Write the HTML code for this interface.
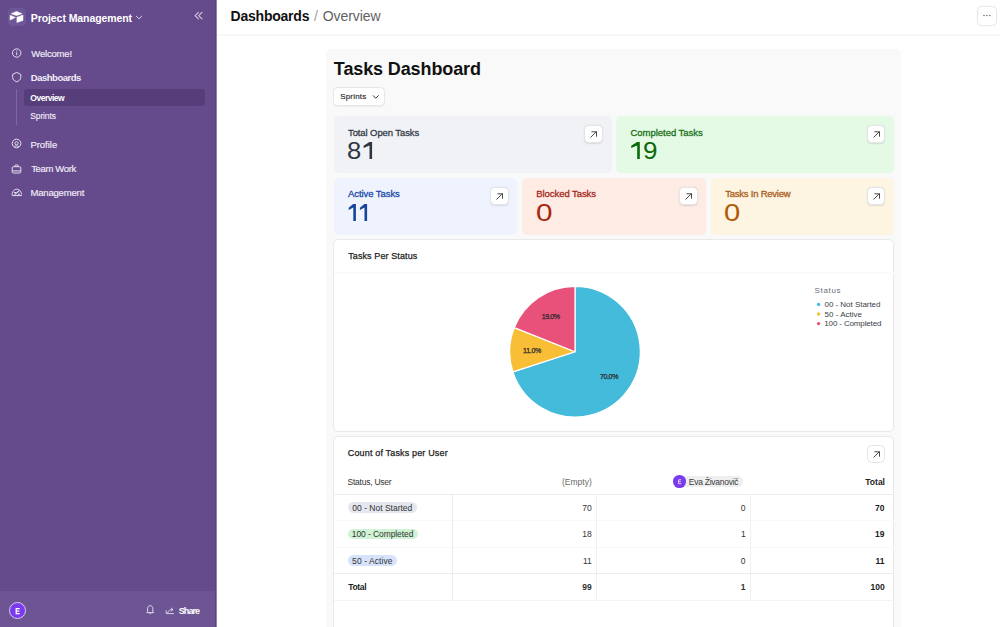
<!DOCTYPE html>
<html><head><meta charset="utf-8"><style>
html,body{margin:0;padding:0;width:1000px;height:627px;overflow:hidden;background:#fff;font-family:"Liberation Sans",sans-serif}
.t{position:absolute;line-height:1;white-space:nowrap}
.card{position:absolute;border-radius:5px}
.wc{position:absolute;background:#fff;border:1px solid #e9e9e9;border-radius:5px;box-sizing:border-box}
.ab{position:absolute;width:18.6px;height:18.2px;box-sizing:border-box;border:1px solid #e3e5e9;border-radius:4.5px;background:#fff}
.pill{position:absolute;height:10.6px;border-radius:6px}
</style></head><body>

<div style="position:absolute;left:0;top:0;width:216px;height:627px;background:#654b8c"></div><div style="position:absolute;left:215px;top:0;width:1px;height:627px;background:#5b4185"></div><div style="position:absolute;left:216px;top:0;width:1px;height:627px;background:#8f85a3"></div>
<div style="position:absolute;left:0;top:591px;width:215px;height:36px;background:#6d5594"></div>
<div style="position:absolute;left:7px;top:7px;width:20px;height:20px;box-sizing:border-box;border-radius:5px;background:#6e5798;border:1px solid #624a8a"></div>
<svg style="position:absolute;left:0;top:0" width="30" height="30" viewBox="0 0 30 30">
  <path d="M11.3 13.7 L16.5 11.4 L21.9 13.7 L16.5 15.5 Z" fill="#fff" stroke="#fff" stroke-width="0.6" stroke-linejoin="round"/>
  <path d="M10.1 15.3 L15.3 17.4 L10.1 20.1 Z" fill="#fff" stroke="#fff" stroke-width="0.5" stroke-linejoin="round"/>
  <path d="M16.9 17.3 L23 15 L23 20.4 L16.9 22.5 Z" fill="#fff" stroke="#fff" stroke-width="0.5" stroke-linejoin="round"/>
</svg>
<svg style="position:absolute;left:135px;top:14px" width="8" height="7" viewBox="0 0 8 7"><path d="M1.3 2.2 L4 4.8 L6.7 2.2" stroke="#d8d0e6" stroke-width="1" fill="none" stroke-linecap="round"/></svg>
<svg style="position:absolute;left:180px;top:0" width="30" height="30" viewBox="180 0 30 30"><path d="M198.4 12.3 L195.1 15.6 L198.4 18.9 M202 12.3 L198.7 15.6 L202 18.9" stroke="#d6cde4" stroke-width="1.05" fill="none" stroke-linecap="round" stroke-linejoin="round"/></svg>

<!-- sidebar icons -->
<svg style="position:absolute;left:0;top:40px" width="30" height="50" viewBox="0 40 30 50"><circle cx="16.7" cy="53" r="4.2" stroke="#e2dbec" stroke-width="1" fill="none"/><path d="M16.7 52.4V55.2" stroke="#e2dbec" stroke-width="1"/><circle cx="16.7" cy="50.9" r="0.55" fill="#e2dbec"/></svg>
<svg style="position:absolute;left:0;top:60px" width="30" height="30" viewBox="0 60 30 30"><path d="M16.7 72.4 L20.8 74.4 V77.2 C20.8 79.6 18.9 81.1 16.7 81.8 C14.5 81.1 12.6 79.6 12.6 77.2 V74.4 Z" stroke="#e2dbec" stroke-width="1" fill="none" stroke-linejoin="round"/></svg>
<div style="position:absolute;left:16px;top:89px;width:1px;height:36px;background:#7d68a2"></div>
<div style="position:absolute;left:24px;top:89px;width:181px;height:17px;border-radius:3px;background:#553e7a"></div>
<svg style="position:absolute;left:11px;top:138.3px" width="11" height="11" viewBox="0 0 11 11"><circle cx="5.55" cy="5.5" r="4.3" stroke="#e6e0ee" stroke-width="1" fill="none"/><circle cx="5.55" cy="5.3" r="1.6" stroke="#e6e0ee" stroke-width="0.95" fill="none"/><path d="M3.3 8.6 C4.2 7.6 6.9 7.6 7.8 8.6" stroke="#e6e0ee" stroke-width="0.95" fill="none"/></svg>
<svg style="position:absolute;left:11.2px;top:163.8px" width="11" height="10" viewBox="0 0 11 10"><rect x="1.2" y="2.7" width="8.6" height="6.3" rx="1.2" stroke="#e6e0ee" stroke-width="1" fill="none"/><path d="M3.9 2.7 V1.6 C3.9 1.2 4.2 1 4.6 1 H6.4 C6.8 1 7.1 1.2 7.1 1.6 V2.7 M1.2 6.9 H9.8" stroke="#e6e0ee" stroke-width="1" fill="none"/></svg>
<svg style="position:absolute;left:11px;top:187.6px" width="12" height="9" viewBox="0 0 12 9"><path d="M1.3 7.6 C0.6 4.4 2.8 1.2 5.8 1.2 C8.8 1.2 11 4.4 10.3 7.6 Z" stroke="#e6e0ee" stroke-width="1" fill="none" stroke-linejoin="round"/><path d="M3.9 6.4 L7.9 3.0 M3.4 4.4 L4.6 4.4 M7.2 6.2 L8.4 6.2" stroke="#e6e0ee" stroke-width="1.05" fill="none" stroke-linecap="round"/></svg>

<!-- footer -->
<div style="position:absolute;left:9px;top:602.2px;width:17.3px;height:17.3px;box-sizing:border-box;border-radius:50%;background:#7c3aed;border:1px solid #d9cdf0"></div>
<svg style="position:absolute;left:145px;top:604px" width="11" height="11" viewBox="0 0 11 11"><path d="M2.6 7.6 V4.8 C2.6 2.8 3.6 1.6 5.2 1.6 C6.8 1.6 7.8 2.8 7.8 4.8 V7.6 C7.8 8 8.5 8.3 8.8 8.6 H1.6 C1.9 8.3 2.6 8 2.6 7.6 Z" stroke="#e4ddef" stroke-width="0.95" fill="none" stroke-linejoin="round"/><path d="M4.4 9.5 C4.7 10 5.7 10 6 9.5" stroke="#e4ddef" stroke-width="0.9" fill="none" stroke-linecap="round"/></svg>
<svg style="position:absolute;left:165px;top:606px" width="10" height="9" viewBox="0 0 10 9"><path d="M1.2 4.6 V7.6 H8.6 M2.8 6.6 C3.3 4.5 4.8 3.6 7.8 3.6 M6.2 2.1 L7.9 3.6 L6.2 5.1" stroke="#e4ddef" stroke-width="0.9" fill="none" stroke-linecap="round" stroke-linejoin="round"/></svg>

<!-- header -->
<div style="position:absolute;left:217px;top:34px;width:783px;height:2px;background:#f8f8f8"></div>
<div style="position:absolute;left:977px;top:5.5px;width:18px;height:18px;border:1px solid #e8e8e8;border-radius:4.5px;background:#fff;box-shadow:0 0 1.5px rgba(0,0,0,0.06)"></div>
<svg style="position:absolute;left:982px;top:14px" width="10" height="3" viewBox="0 0 10 3"><circle cx="2" cy="1.5" r="0.75" fill="#666"/><circle cx="4.9" cy="1.5" r="0.75" fill="#666"/><circle cx="7.8" cy="1.5" r="0.75" fill="#666"/></svg>

<!-- panel -->
<div style="position:absolute;left:326px;top:49px;width:575px;height:600px;background:#f9f9f9;border-radius:5px"></div>
<div style="position:absolute;left:333px;top:87.4px;width:52.3px;height:18.8px;box-sizing:border-box;border:1px solid #e6e6e6;border-radius:4.5px;background:#fff;box-shadow:0 0.5px 1px rgba(0,0,0,0.05)"></div>
<svg style="position:absolute;left:372px;top:93.8px" width="8" height="6" viewBox="0 0 8 6"><path d="M1.3 1.7 L3.8 4.3 L6.3 1.7" stroke="#333" stroke-width="1" fill="none" stroke-linecap="round" stroke-linejoin="round"/></svg>

<div class="card" style="left:334px;top:116px;width:277.5px;height:57px;background:#f1f2f6"></div>
<div class="card" style="left:616px;top:116px;width:278px;height:57px;background:#e4fae5"></div>
<div class="card" style="left:334px;top:178px;width:183px;height:56.5px;background:#eef3fd"></div>
<div class="card" style="left:522px;top:178px;width:183.7px;height:56.5px;background:#fdebe4"></div>
<div class="card" style="left:710.6px;top:178px;width:183.4px;height:56.5px;background:#fdf4e1"></div>
<div class='ab' style='left:584.3px;top:125px;box-shadow:0 0.5px 1.5px rgba(0,0,0,0.10);'><svg style="position:absolute;left:0;top:0" width="18" height="18" viewBox="0 0 18 18"><path d="M5.8 11.2 L11.4 5.7 M6.8 5.8 H11.5 V10.3" stroke="#4a4a4a" stroke-width="1" fill="none" stroke-linecap="round" stroke-linejoin="round"/></svg></div>
<div class='ab' style='left:866.8px;top:125px;box-shadow:0 0.5px 1.5px rgba(0,0,0,0.10);'><svg style="position:absolute;left:0;top:0" width="18" height="18" viewBox="0 0 18 18"><path d="M5.8 11.2 L11.4 5.7 M6.8 5.8 H11.5 V10.3" stroke="#4a4a4a" stroke-width="1" fill="none" stroke-linecap="round" stroke-linejoin="round"/></svg></div>
<div class='ab' style='left:490.3px;top:187px;box-shadow:0 0.5px 1.5px rgba(0,0,0,0.10);'><svg style="position:absolute;left:0;top:0" width="18" height="18" viewBox="0 0 18 18"><path d="M5.8 11.2 L11.4 5.7 M6.8 5.8 H11.5 V10.3" stroke="#4a4a4a" stroke-width="1" fill="none" stroke-linecap="round" stroke-linejoin="round"/></svg></div>
<div class='ab' style='left:679px;top:187px;box-shadow:0 0.5px 1.5px rgba(0,0,0,0.10);'><svg style="position:absolute;left:0;top:0" width="18" height="18" viewBox="0 0 18 18"><path d="M5.8 11.2 L11.4 5.7 M6.8 5.8 H11.5 V10.3" stroke="#4a4a4a" stroke-width="1" fill="none" stroke-linecap="round" stroke-linejoin="round"/></svg></div>
<div class='ab' style='left:866.8px;top:187px;box-shadow:0 0.5px 1.5px rgba(0,0,0,0.10);'><svg style="position:absolute;left:0;top:0" width="18" height="18" viewBox="0 0 18 18"><path d="M5.8 11.2 L11.4 5.7 M6.8 5.8 H11.5 V10.3" stroke="#4a4a4a" stroke-width="1" fill="none" stroke-linecap="round" stroke-linejoin="round"/></svg></div>

<div class="wc" style="left:333px;top:239px;width:561px;height:192.5px"></div>
<div style="position:absolute;left:334px;top:272px;width:560px;height:2px;background:#fafafa"></div>
<svg style="position:absolute;left:0;top:0" width="1000" height="627"><path d="M575.0,351.7 L575.00,286.40 A65.3,65.3 0 1 1 512.90,371.88 Z" fill="#45bbdc" stroke="#fff" stroke-width="1.2" stroke-linejoin="round"/><path d="M575.0,351.7 L512.90,371.88 A65.3,65.3 0 0 1 514.29,327.66 Z" fill="#f7be36" stroke="#fff" stroke-width="1.2" stroke-linejoin="round"/><path d="M575.0,351.7 L514.29,327.66 A65.3,65.3 0 0 1 575.00,286.40 Z" fill="#e8527a" stroke="#fff" stroke-width="1.2" stroke-linejoin="round"/></svg>
<svg style="position:absolute;left:0;top:0" width="1000" height="627"><circle cx="818.6" cy="304.4" r="1.7" fill="#45bbdc"/><circle cx="818.6" cy="314" r="1.7" fill="#f7be36"/><circle cx="818.6" cy="323.6" r="1.7" fill="#e8527a"/></svg>

<div class="wc" style="left:333px;top:436px;width:561px;height:220px"></div>
<div class='ab' style='left:866.8px;top:445.2px;'><svg style="position:absolute;left:0;top:0" width="18" height="18" viewBox="0 0 18 18"><path d="M5.8 11.2 L11.4 5.7 M6.8 5.8 H11.5 V10.3" stroke="#4a4a4a" stroke-width="1" fill="none" stroke-linecap="round" stroke-linejoin="round"/></svg></div>
<div style="position:absolute;left:334px;top:493.5px;width:560px;height:1px;background:#ececec"></div>
<div style="position:absolute;left:334px;top:520px;width:560px;height:1px;background:#f9f9f9"></div>
<div style="position:absolute;left:334px;top:546.5px;width:560px;height:1px;background:#f9f9f9"></div>
<div style="position:absolute;left:334px;top:573px;width:560px;height:1px;background:#ececec"></div>
<div style="position:absolute;left:334px;top:600px;width:560px;height:1px;background:#f3f3f3"></div>
<div style="position:absolute;left:452px;top:494px;width:1px;height:106px;background:#ececec"></div>
<div style="position:absolute;left:596px;top:494px;width:1px;height:106px;background:#f0f0f0"></div>
<div style="position:absolute;left:750px;top:494px;width:1px;height:106px;background:#f0f0f0"></div>
<div class="pill" style="left:347.6px;top:502.4px;width:69px;background:#e4e7ee"></div>
<div class="pill" style="left:347.6px;top:528.8px;width:70.4px;background:#cff3d4"></div>
<div class="pill" style="left:347.6px;top:555px;width:49.4px;background:#d6e3fb"></div>
<div style="position:absolute;left:676px;top:476.4px;width:67px;height:10.2px;border-radius:5.1px;background:#efefef"></div>
<div style="position:absolute;left:673.3px;top:475.3px;width:12.5px;height:12.6px;border-radius:50%;background:#7c3aed"></div>

<div class='t' style='left:30.75px;top:13.00px;font-size:10.5px;font-weight:700;color:#ffffff;letter-spacing:-0.079px;'>Project Management</div>
<div class='t' style='left:31.30px;top:49.00px;font-size:9.5px;font-weight:400;color:#f3eef8;letter-spacing:-0.179px;-webkit-text-stroke:0.15px #f3eef8;'>Welcome!</div>
<div class='t' style='left:30.80px;top:73.00px;font-size:9.5px;font-weight:700;color:#f3eef8;letter-spacing:-0.478px;'>Dashboards</div>
<div class='t' style='left:30.35px;top:94.00px;font-size:8.5px;font-weight:700;color:#ffffff;letter-spacing:-0.500px;'>Overview</div>
<div class='t' style='left:30.35px;top:112.00px;font-size:8.5px;font-weight:400;color:#f3eef8;letter-spacing:-0.150px;-webkit-text-stroke:0.1px #f3eef8;'>Sprints</div>
<div class='t' style='left:30.45px;top:140.00px;font-size:9.5px;font-weight:400;color:#f3eef8;letter-spacing:-0.033px;-webkit-text-stroke:0.15px #f3eef8;'>Profile</div>
<div class='t' style='left:31.20px;top:164.00px;font-size:9.5px;font-weight:400;color:#f3eef8;letter-spacing:-0.338px;-webkit-text-stroke:0.15px #f3eef8;'>Team Work</div>
<div class='t' style='left:30.45px;top:188.00px;font-size:9.5px;font-weight:400;color:#f3eef8;letter-spacing:-0.172px;-webkit-text-stroke:0.15px #f3eef8;'>Management</div>
<div class='t' style='left:178.75px;top:607.00px;font-size:9px;font-weight:700;color:#ffffff;letter-spacing:-0.925px;'>Share</div>
<div class='t' style='left:230.60px;top:9.00px;font-size:14px;font-weight:700;color:#111111;letter-spacing:-0.228px;'>Dashboards</div>
<div class='t' style='left:314.00px;top:9.00px;font-size:14px;font-weight:400;color:#a0a0a0;letter-spacing:0.000px;'>/</div>
<div class='t' style='left:322.75px;top:9.00px;font-size:14px;font-weight:400;color:#5f5f5f;letter-spacing:-0.057px;'>Overview</div>
<div class='t' style='left:333.85px;top:60.00px;font-size:18px;font-weight:700;color:#111111;letter-spacing:-0.118px;'>Tasks Dashboard</div>
<div class='t' style='left:340.25px;top:93.00px;font-size:8px;font-weight:400;color:#2a2a2a;letter-spacing:0.167px;-webkit-text-stroke:0.15px #2a2a2a;'>Sprints</div>
<div class='t' style='left:348.00px;top:128.00px;font-size:9.5px;font-weight:400;color:#353c47;letter-spacing:-0.100px;-webkit-text-stroke:0.3px #353c47;'>Total Open Tasks</div>
<div class='t' style='left:346.93px;top:139.00px;font-size:24px;font-weight:400;color:#2f3640;letter-spacing:0.000px;transform:scaleX(1.067);transform-origin:0 0;'>8</div>
<div class='t' style='left:630.55px;top:128.00px;font-size:9.5px;font-weight:400;color:#1a721a;letter-spacing:-0.039px;-webkit-text-stroke:0.3px #1a721a;'>Completed Tasks</div>
<div class='t' style='left:642.92px;top:139.00px;font-size:24px;font-weight:400;color:#0c6a0c;letter-spacing:0.000px;transform:scaleX(1.084);transform-origin:0 0;'>9</div>
<div class='t' style='left:348.00px;top:189.00px;font-size:9.5px;font-weight:400;color:#1f4aa8;letter-spacing:-0.073px;-webkit-text-stroke:0.3px #1f4aa8;'>Active Tasks</div>
<div class='t' style='left:536.30px;top:189.00px;font-size:9.5px;font-weight:400;color:#a5281c;letter-spacing:-0.067px;-webkit-text-stroke:0.3px #a5281c;'>Blocked Tasks</div>
<div class='t' style='left:535.57px;top:201.00px;font-size:24px;font-weight:400;color:#a82812;letter-spacing:0.000px;transform:scaleX(1.235);transform-origin:0 0;'>0</div>
<div class='t' style='left:725.30px;top:189.00px;font-size:9.5px;font-weight:400;color:#a85e1c;letter-spacing:-0.239px;-webkit-text-stroke:0.3px #a85e1c;'>Tasks In Review</div>
<div class='t' style='left:724.28px;top:201.00px;font-size:24px;font-weight:400;color:#b05a08;letter-spacing:0.000px;transform:scaleX(1.217);transform-origin:0 0;'>0</div>
<div class='t' style='left:348.20px;top:252.00px;font-size:9px;font-weight:400;color:#222222;letter-spacing:0.103px;-webkit-text-stroke:0.25px #222222;'>Tasks Per Status</div>
<div class='t' style='left:814.50px;top:287.00px;font-size:8px;font-weight:400;color:#6b6f78;letter-spacing:0.680px;'>Status</div>
<div class='t' style='left:824.55px;top:301.00px;font-size:8px;font-weight:400;color:#3a3f47;letter-spacing:-0.037px;'>00 - Not Started</div>
<div class='t' style='left:824.55px;top:311.00px;font-size:8px;font-weight:400;color:#3a3f47;letter-spacing:0.005px;'>50 - Active</div>
<div class='t' style='left:824.30px;top:320.00px;font-size:8px;font-weight:400;color:#3a3f47;letter-spacing:-0.146px;'>100 - Completed</div>
<div class='t' style='left:541.70px;top:313.00px;font-size:7px;font-weight:400;color:#2a2a2a;letter-spacing:-0.363px;-webkit-text-stroke:0.25px #2a2a2a;'>19.0%</div>
<div class='t' style='left:523.10px;top:347.00px;font-size:7px;font-weight:400;color:#2a2a2a;letter-spacing:-0.287px;-webkit-text-stroke:0.25px #2a2a2a;'>11.0%</div>
<div class='t' style='left:599.95px;top:373.00px;font-size:7px;font-weight:400;color:#2a2a2a;letter-spacing:-0.350px;-webkit-text-stroke:0.25px #2a2a2a;'>70.0%</div>
<div class='t' style='left:347.75px;top:449.00px;font-size:9px;font-weight:400;color:#222222;letter-spacing:0.161px;-webkit-text-stroke:0.25px #222222;'>Count of Tasks per User</div>
<div class='t' style='left:347.50px;top:478.00px;font-size:8.5px;font-weight:400;color:#333333;letter-spacing:-0.241px;'>Status, User</div>
<div class='t' style='left:561.90px;top:478.00px;font-size:8.5px;font-weight:400;color:#6b6b6b;letter-spacing:0.042px;'>(Empty)</div>
<div class='t' style='left:688.85px;top:478.00px;font-size:8.5px;font-weight:400;color:#3a3a3a;letter-spacing:-0.267px;'>Eva Živanovič</div>
<div class='t' style='left:865.30px;top:478.00px;font-size:8.5px;font-weight:700;color:#222222;letter-spacing:0.000px;'>Total</div>
<div class='t' style='left:352.35px;top:504.00px;font-size:8.5px;font-weight:400;color:#333333;letter-spacing:-0.003px;'>00 - Not Started</div>
<div class='t' style='left:351.85px;top:530.00px;font-size:8.5px;font-weight:400;color:#333333;letter-spacing:-0.093px;'>100 - Completed</div>
<div class='t' style='left:352.10px;top:557.00px;font-size:8.5px;font-weight:400;color:#333333;letter-spacing:0.075px;'>50 - Active</div>
<div class='t' style='left:348.20px;top:583.00px;font-size:8.5px;font-weight:700;color:#222222;letter-spacing:-0.300px;'>Total</div>
<div class='t' style='left:582.25px;top:504.00px;font-size:8.5px;font-weight:400;color:#333333;letter-spacing:0.000px;'>70</div>
<div class='t' style='left:740.80px;top:504.00px;font-size:8.5px;font-weight:400;color:#333333;letter-spacing:0.000px;'>0</div>
<div class='t' style='left:875.05px;top:504.00px;font-size:8.5px;font-weight:700;color:#222222;letter-spacing:0.000px;'>70</div>
<div class='t' style='left:582.25px;top:530.00px;font-size:8.5px;font-weight:400;color:#333333;letter-spacing:0.000px;'>18</div>
<div class='t' style='left:741.05px;top:530.00px;font-size:8.5px;font-weight:400;color:#333333;letter-spacing:0.000px;'>1</div>
<div class='t' style='left:875.05px;top:530.00px;font-size:8.5px;font-weight:700;color:#222222;letter-spacing:0.000px;'>19</div>
<div class='t' style='left:583.00px;top:557.00px;font-size:8.5px;font-weight:400;color:#333333;letter-spacing:0.000px;'>11</div>
<div class='t' style='left:740.80px;top:557.00px;font-size:8.5px;font-weight:400;color:#333333;letter-spacing:0.000px;'>0</div>
<div class='t' style='left:875.55px;top:557.00px;font-size:8.5px;font-weight:700;color:#222222;letter-spacing:0.000px;'>11</div>
<div class='t' style='left:582.25px;top:583.00px;font-size:8.5px;font-weight:700;color:#333333;letter-spacing:0.000px;'>99</div>
<div class='t' style='left:740.80px;top:583.00px;font-size:8.5px;font-weight:700;color:#333333;letter-spacing:0.000px;'>1</div>
<div class='t' style='left:870.55px;top:583.00px;font-size:8.5px;font-weight:700;color:#222222;letter-spacing:0.000px;'>100</div><svg style="position:absolute;left:0;top:0" width="1000" height="627"><path d="M372.10 142 V159 H369.50 V145.40 L363.60 147.90 V145.70 L369.40 142 Z" fill="#2f3640"/><path d="M639.80 142 V159 H637.20 V145.40 L631.20 147.90 V145.70 L637.10 142 Z" fill="#0c6a0c"/><path d="M355.90 204 V221 H353.30 V207.40 L348.70 209.90 V207.70 L353.20 204 Z" fill="#15449e"/><path d="M367.10 204 V221 H364.50 V207.40 L359.90 209.90 V207.70 L364.40 204 Z" fill="#15449e"/></svg><svg style="position:absolute;left:0;top:0" width="1000" height="627"><path d="M19.7 608.6 H16.2 V613.6 H19.7 M16.2 611.1 H19.3" stroke="#fff" stroke-width="1.25" fill="none"/><path d="M681.2 479.8 H678.5 V483.7 H681.2 M678.5 481.75 H680.9" stroke="#f3eefe" stroke-width="0.8" fill="none"/></svg>
</body></html>
